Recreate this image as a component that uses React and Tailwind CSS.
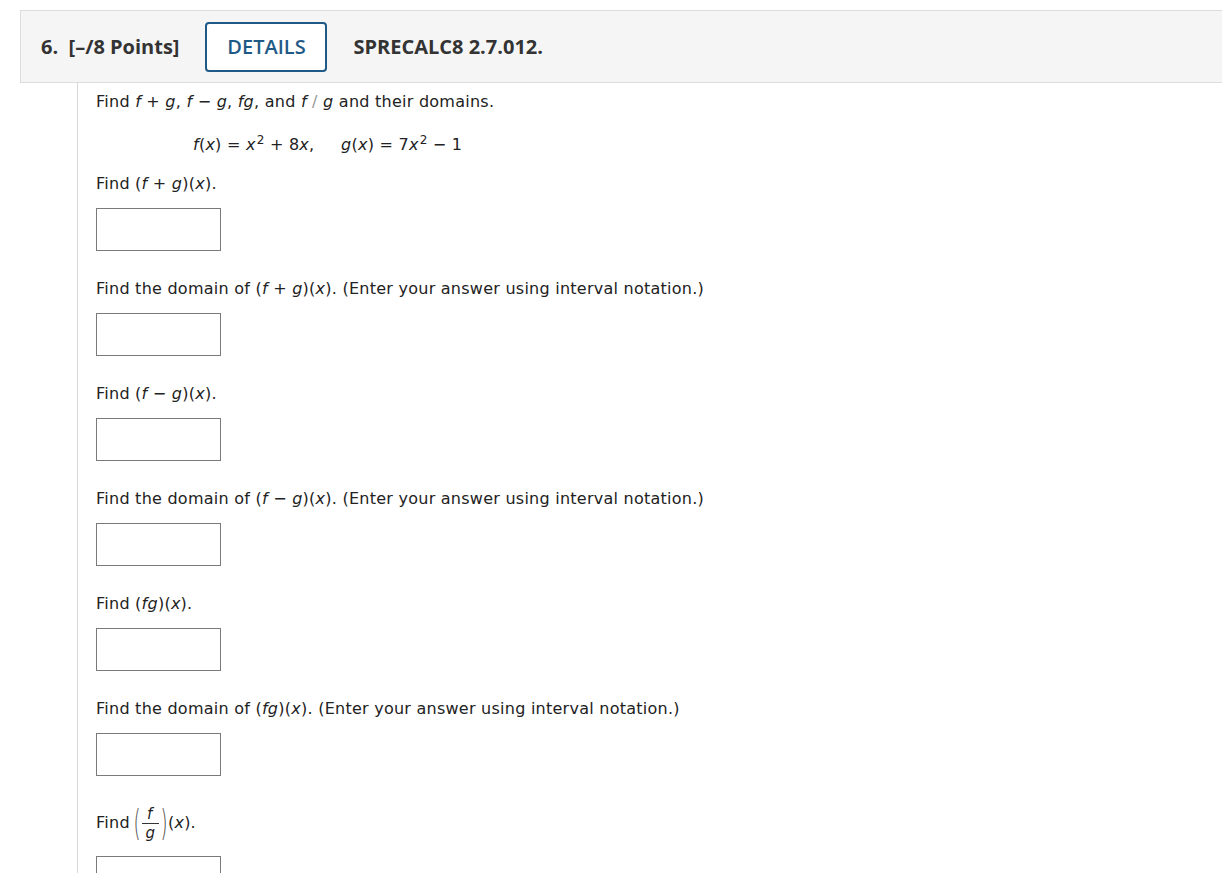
import React from "react";

// italic math variable
const V = ({ children }) => <i className="italic">{children}</i>;

const Sq = () => <sup className="ml-[1px] text-[12px]">2</sup>;

const AnswerBox = () => (
  <div className="mt-3 mb-[26px] h-[43px] w-[125px] border border-[#7a7a7a] bg-white" />
);

// tall thin delimiter, stretched vertically like the rendered math paren
const Paren = ({ children }) => (
  <span className="inline-block origin-center scale-y-[1.75] scale-x-[0.9] text-[20px] font-light leading-none text-[#444]">
    {children}
  </span>
);

const Fraction = () => (
  <span className="ml-[3px] inline-flex items-center">
    <Paren>(</Paren>
    <span className="mx-[1px] inline-flex flex-col items-center text-[15px] leading-[16px]">
      <span className="pr-[1px]">
        <V>f</V>
      </span>
      <span className="my-[1px] h-px w-[17px] bg-[#333]" />
      <span>
        <V>g</V>
      </span>
    </span>
    <Paren>)</Paren>
  </span>
);

const questions = [
  { label: <>Find (<V>f</V> + <V>g</V>)(<V>x</V>).</> },
  { label: <>Find the domain of (<V>f</V> + <V>g</V>)(<V>x</V>). (Enter your answer using interval notation.)</> },
  { label: <>Find (<V>f</V> − <V>g</V>)(<V>x</V>).</> },
  { label: <>Find the domain of (<V>f</V> − <V>g</V>)(<V>x</V>). (Enter your answer using interval notation.)</> },
  { label: <>Find (<V>fg</V>)(<V>x</V>).</> },
  { label: <>Find the domain of (<V>fg</V>)(<V>x</V>). (Enter your answer using interval notation.)</> },
];

export default function App() {
  return (
    <div className="min-h-screen w-full overflow-hidden bg-white pl-5 pt-[10px]">
      {/* question header */}
      <div className="flex h-[73px] items-center border border-r-0 border-[#dcdcdc] bg-[#f5f5f5] pl-5 font-['Open_Sans',sans-serif] text-[20px] font-bold text-[#333]">
        <span>6.&nbsp; [–/8 Points]</span>
        <div className="ml-[26px] flex h-[50px] w-[122px] items-center justify-center rounded-[4px] border-2 border-[#1f5a87] bg-white font-semibold text-[#1f5a87]">
          DETAILS
        </div>
        <span className="ml-[26px]">SPRECALC8 2.7.012.</span>
      </div>

      {/* question body */}
      <div className="ml-[57px] border-l border-[#d8d8d8] pl-[18px] pt-[7px] font-['DejaVu_Sans',Verdana,sans-serif] text-[16px] leading-[24px] tracking-[0.25px] text-[#222]">
        <p>
          Find <V>f</V> + <V>g</V>, <V>f</V> − <V>g</V>, <V>fg</V>, and <V>f</V>{" "}
          <span className="text-[#999]">/</span> <V>g</V> and their domains.
        </p>
        <p className="mt-[19px] pl-[97px]">
          <V>f</V>(<V>x</V>) = <V>x</V>
          <Sq /> + 8<V>x</V>,&nbsp;&nbsp;&nbsp;&nbsp; <V>g</V>(<V>x</V>) = 7<V>x</V>
          <Sq /> − 1
        </p>
        <div className="mt-[15px]">
          {questions.map((q, i) => (
            <div key={i}>
              <p>{q.label}</p>
              <AnswerBox />
            </div>
          ))}
          <p className="flex h-[42px] items-center">
            <span>Find</span>
            <Fraction />
            <span>
              (<V>x</V>).
            </span>
          </p>
          <AnswerBox />
        </div>
      </div>
    </div>
  );
}
